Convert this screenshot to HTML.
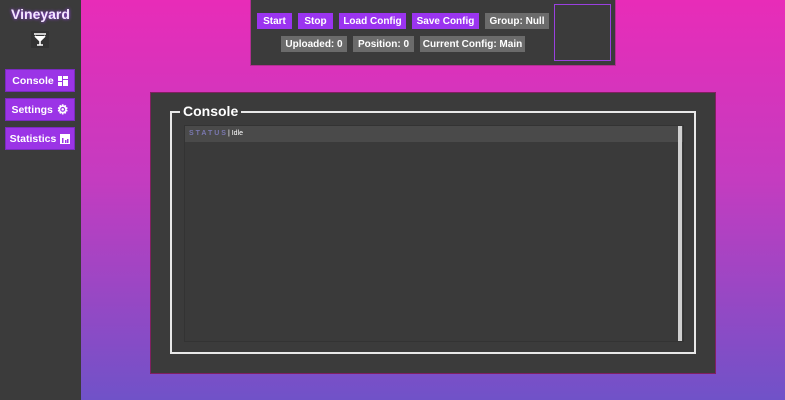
<!DOCTYPE html>
<html><head><style>
*{margin:0;padding:0;box-sizing:border-box}
body{width:785px;height:400px;overflow:hidden;position:relative;font-family:"Liberation Sans",sans-serif;background:linear-gradient(180deg,#e82cb8 0%,#c43cc0 45%,#7052c8 100%)}
.side{position:absolute;left:0;top:0;width:81px;height:400px;background:#3b3b3b}
.title{position:absolute;left:0;width:81px;top:6px;text-align:center;color:#f4e6ff;font-weight:bold;font-size:14px;text-shadow:0 0 3px #a040ff}
.icon{position:absolute;left:31px;top:31px;width:18px;height:17px;background:#333}
.sb{position:absolute;left:5px;width:70px;height:23px;background:#9b34e6;color:#fff;font-weight:bold;font-size:10.5px;display:flex;align-items:center;justify-content:center;gap:4px;border:1px solid #7a2ac0}
.top{position:absolute;left:251px;top:0;width:364px;height:65px;background:#3b3b3b;box-shadow:0 0 0 1px #b03090}
.b{position:absolute;height:16px;font-size:10px;font-weight:bold;color:#fff;display:flex;align-items:center;justify-content:center}
.p{background:#9b34f0}.g{background:#6b6b6b}
.sq{position:absolute;left:554px;top:4px;width:57px;height:57px;border:1px solid #9a40e0}
.con{position:absolute;left:151px;top:93px;width:564px;height:280px;background:#3b3b3b;box-shadow:0 0 0 1px #802060}
.fs{position:absolute;left:19px;top:18px;width:526px;height:243px;border:2px solid #e8e8e8}
.legend{position:absolute;left:8px;top:-10px;background:#3b3b3b;color:#fff;font-weight:bold;font-size:14px;padding:0 3px;line-height:16px}
.log{position:absolute;left:12px;top:12px;width:500px;height:217px;background:#3a3a3a;border:1px solid #333}
.hd{height:16px;background:#4a4a4a;font-size:7px;color:#fff;line-height:16px;padding-left:4px}
.st{color:#7a78b0;letter-spacing:2px;font-weight:bold}
.scr{position:absolute;right:1px;top:0;width:4px;height:215px;background:#d0d0d0}
</style></head><body>
<div class="side">
<div class="title">Vineyard</div>
<div class="icon"><svg width="18" height="17" viewBox="0 0 18 17"><path d="M3 3H15M4 5L9 10L14 5M9 10V14M6 14H12" stroke="#fff" stroke-width="1.6" fill="none"/><path d="M4.5 5H13.5L9 9.5Z" fill="#fff"/></svg></div>
<div class="sb" style="top:69px">Console <svg width="10" height="10"><rect x="0" y="0" width="4" height="5" fill="#fff"/><rect x="5" y="0" width="5" height="3" fill="#fff"/><rect x="0" y="6" width="4" height="4" fill="#fff"/><rect x="5" y="4" width="5" height="6" fill="#fff"/></svg></div>
<div class="sb" style="top:98px">Settings <span style="font-size:13px">⚙</span></div>
<div class="sb" style="top:127px">Statistics <svg width="10" height="10"><rect width="10" height="10" fill="#fff"/><rect x="2" y="4" width="1.5" height="5" fill="#9b34e6"/><rect x="5" y="6" width="1.5" height="3" fill="#9b34e6"/><rect x="7" y="5" width="1.5" height="4" fill="#9b34e6"/></svg></div>
</div>
<div class="top"></div>
<div class="b p" style="left:257px;top:13px;width:35px">Start</div>
<div class="b p" style="left:298px;top:13px;width:35px">Stop</div>
<div class="b p" style="left:339px;top:13px;width:67px">Load Config</div>
<div class="b p" style="left:412px;top:13px;width:67px">Save Config</div>
<div class="b g" style="left:485px;top:13px;width:64px">Group: Null</div>
<div class="b g" style="left:281px;top:36px;width:66px">Uploaded: 0</div>
<div class="b g" style="left:353px;top:36px;width:61px">Position: 0</div>
<div class="b g" style="left:420px;top:36px;width:105px">Current Config: Main</div>
<div class="sq"></div>
<div class="con"><div class="fs"><div class="legend">Console</div>
<div class="log"><div class="hd"><span class="st">STATUS</span>| Idle</div><div class="scr"></div></div>
</div></div>
</body></html>
